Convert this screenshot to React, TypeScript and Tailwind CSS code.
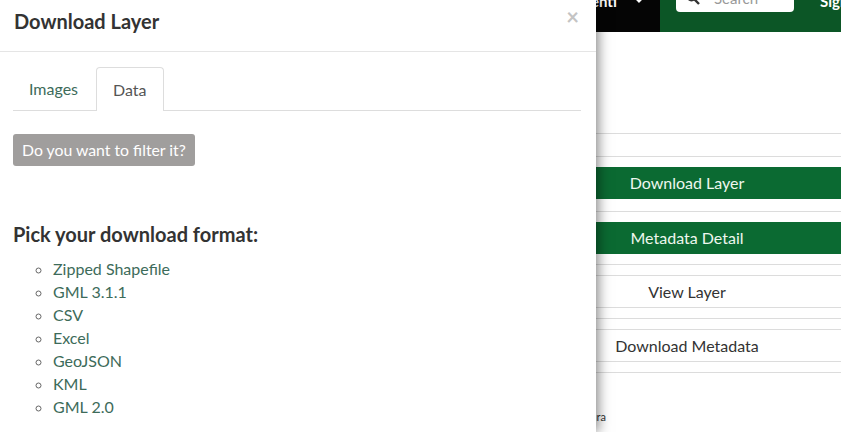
import React from "react";

const formats = [
  "Zipped Shapefile",
  "GML 3.1.1",
  "CSV",
  "Excel",
  "GeoJSON",
  "KML",
  "GML 2.0",
];

function Line() {
  return <div className="h-px shrink-0 bg-[#dcdcdc]" />;
}

function Page() {
  return (
    <div className="flex h-full flex-col">
      <nav className="flex h-8 shrink-0 overflow-hidden">
        <div className="flex w-[660px] shrink-0 items-start justify-end bg-[#050505] pr-[17px]">
          <span className="-mt-[9px] whitespace-nowrap text-[15px] font-bold leading-5 text-white">
            Documenti
          </span>
          <svg
            className="-mt-[3px] ml-[18px]"
            width="8"
            height="7"
            viewBox="0 0 8 7"
          >
            <path d="M1 1.5 L4 4.5 L7 1.5" stroke="white" strokeWidth="2" fill="none" />
          </svg>
        </div>
        <div className="flex flex-1 items-start bg-[#0c5626]">
          <div className="ml-4 -mt-5 flex h-8 w-[118px] shrink-0 items-end rounded-[4px] bg-white pb-[6px] pl-[10px]">
            <svg
              className="mb-[1px]"
              width="14"
              height="14"
              viewBox="0 0 14 14"
            >
              <circle cx="5.5" cy="5.5" r="4" stroke="#333" strokeWidth="2" fill="none" />
              <path d="M8.5 8.5 L13 13" stroke="#333" strokeWidth="2.4" />
            </svg>
            <span className="ml-[14px] text-[15px] leading-none text-[#999]">Search</span>
          </div>
          <span className="ml-[26px] -mt-[9px] whitespace-nowrap text-[15px] font-bold leading-5 text-white">
            Sign in
          </span>
        </div>
      </nav>
      <div className="flex flex-1">
        <div className="w-[533px] shrink-0" />
        <div className="flex flex-1 flex-col text-[16px] text-[#333]">
          <div className="h-[101px] shrink-0" />
          <Line />
          <div className="h-[22px] shrink-0" />
          <Line />
          <div className="mt-[10px] flex h-8 shrink-0 items-center justify-center bg-[#0b6a32] text-[#eef7ee]">
            Download Layer
          </div>
          <div className="h-[12px] shrink-0" />
          <Line />
          <div className="mt-[10px] flex h-8 shrink-0 items-center justify-center bg-[#0b6a32] text-[#eef7ee]">
            Metadata Detail
          </div>
          <div className="h-[10px] shrink-0" />
          <Line />
          <div className="h-[10px] shrink-0" />
          <Line />
          <div className="flex h-[31px] shrink-0 items-center justify-center">View Layer</div>
          <Line />
          <div className="h-[10px] shrink-0" />
          <Line />
          <div className="h-[10px] shrink-0" />
          <Line />
          <div className="flex h-[31px] shrink-0 items-center justify-center">
            Download Metadata
          </div>
          <Line />
          <div className="h-[10px] shrink-0" />
          <Line />
          <div className="mt-[36px] w-[73px] text-right text-[11px] text-[#333]">Copertura</div>
        </div>
      </div>
    </div>
  );
}

function Modal() {
  return (
    <div className="absolute left-0 top-0 h-full w-[596px] bg-white shadow-[2px_0_12px_rgba(0,0,0,0.5)]">
      <div className="flex h-[52px] items-start justify-between border-b border-[#e5e5e5] pl-[14px] pr-[17px]">
        <h4 className="mt-[8px] text-[20px] font-bold leading-[26px] text-[#333]">
          Download Layer
        </h4>
        <button
          type="button"
          className="mt-[6px] text-[22px] font-bold leading-none text-[#c4c4c4]"
        >
          ×
        </button>
      </div>
      <div className="pl-[13px] pr-[15px] pt-[15px]">
        <ul className="flex border-b border-[#ddd]">
          <li className="mr-[2px] flex h-[43px] items-center px-4 text-[16px] text-[#3d6b5a]">
            Images
          </li>
          <li className="-mb-px flex h-[44px] items-center rounded-t-[4px] border border-b-0 border-[#ddd] bg-white px-4 text-[16px] text-[#555]">
            Data
          </li>
        </ul>
        <button
          type="button"
          className="mt-[23px] flex h-8 items-center rounded-[3px] bg-[#a09e9d] px-[9px] text-[15.8px] text-white"
        >
          Do you want to filter it?
        </button>
        <h3 className="mt-[56px] text-[20px] font-bold leading-[1.2] text-[#333]">
          Pick your download format:
        </h3>
        <ul className="mt-[11px] list-[circle] pl-10 text-[16px] leading-[23px] text-[#666]">
          {formats.map((f) => (
            <li key={f}>
              <a href="#" className="text-[#3d6b5a]">
                {f}
              </a>
            </li>
          ))}
        </ul>
      </div>
    </div>
  );
}

export default function App() {
  return (
    <div className="relative h-[432px] w-[841px] overflow-hidden bg-white font-['Lato',sans-serif]">
      <Page />
      <Modal />
    </div>
  );
}
